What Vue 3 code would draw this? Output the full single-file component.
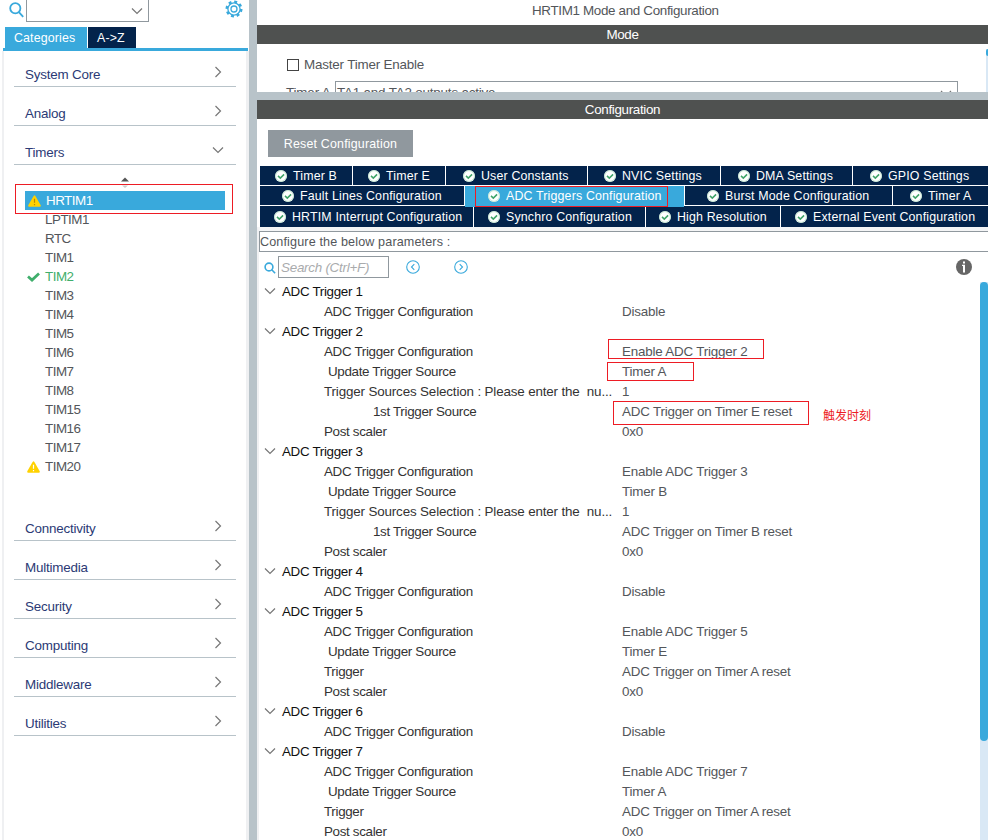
<script setup>
const topCategories = [
  { name: 'System Core', open: false },
  { name: 'Analog', open: false },
  { name: 'Timers', open: true },
]
const bottomCategories = ['Connectivity', 'Multimedia', 'Security', 'Computing', 'Middleware', 'Utilities']
const timers = [
  { name: 'HRTIM1', state: 'warn', selected: true },
  { name: 'LPTIM1' }, { name: 'RTC' }, { name: 'TIM1' },
  { name: 'TIM2', state: 'ok' },
  { name: 'TIM3' }, { name: 'TIM4' }, { name: 'TIM5' }, { name: 'TIM6' },
  { name: 'TIM7' }, { name: 'TIM8' }, { name: 'TIM15' }, { name: 'TIM16' },
  { name: 'TIM17' }, { name: 'TIM20', state: 'warn' },
]

// width: tab width, pad: space before the status icon
const tabRows = [
  [
    { name: 'Timer B', width: 92, pad: 15 },
    { name: 'Timer E', width: 92, pad: 15 },
    { name: 'User Constants', width: 141, pad: 17 },
    { name: 'NVIC Settings', width: 132, pad: 16 },
    { name: 'DMA Settings', width: 131, pad: 17 },
    { name: 'GPIO Settings', width: 135, pad: 17 },
  ],
  [
    { name: 'Fault Lines Configuration', width: 204, pad: 22 },
    { name: 'ADC Triggers Configuration', width: 219, pad: 23, active: true },
    { name: 'Burst Mode Configuration', width: 207, pad: 22 },
    { name: 'Timer A', width: 95, pad: 17 },
  ],
  [
    { name: 'HRTIM Interrupt Configuration', width: 213, pad: 14 },
    { name: 'Synchro Configuration', width: 171, pad: 14 },
    { name: 'High Resolution', width: 134, pad: 13 },
    { name: 'External Event Configuration', width: 207, pad: 14 },
  ],
]

const cfg = (v) => ({ label: 'ADC Trigger Configuration', value: v })
const upd = (v) => ({ label: 'Update Trigger Source', value: v, kind: 'shift' })
const post = { label: 'Post scaler', value: '0x0' }
const sel = { label: 'Trigger Sources Selection : Please enter the \u00a0nu...', value: '1', kind: 'long' }
const first = (v) => ({ label: '1st Trigger Source', value: v, kind: 'deep' })
const groups = [
  { name: 'ADC Trigger 1', rows: [cfg('Disable')] },
  { name: 'ADC Trigger 2', rows: [cfg('Enable ADC Trigger 2'), upd('Timer A'), sel, first('ADC Trigger on Timer E reset'), post] },
  { name: 'ADC Trigger 3', rows: [cfg('Enable ADC Trigger 3'), upd('Timer B'), sel, first('ADC Trigger on Timer B reset'), post] },
  { name: 'ADC Trigger 4', rows: [cfg('Disable')] },
  { name: 'ADC Trigger 5', rows: [cfg('Enable ADC Trigger 5'), upd('Timer E'), { label: 'Trigger', value: 'ADC Trigger on Timer A reset' }, post] },
  { name: 'ADC Trigger 6', rows: [cfg('Disable')] },
  { name: 'ADC Trigger 7', rows: [cfg('Enable ADC Trigger 7'), upd('Timer A'), { label: 'Trigger', value: 'ADC Trigger on Timer A reset' }, post] },
]
</script>

<template>
  <div class="window">
    <aside class="side">
      <div class="side-search">
        <svg class="glass" width="16" height="16" viewBox="0 0 16 16"><circle cx="6.3" cy="6.3" r="5.1" /><path d="M9.9 10.1l4.3 4.7" /></svg>
        <div class="combo">
          <svg width="12" height="8" viewBox="0 0 12 8"><path class="chev" d="M1 1.5l5 5 5-5" /></svg>
        </div>
        <svg class="gear" width="18" height="18" viewBox="0 0 18 18">
          <circle class="teeth" cx="9" cy="9" r="7.3" />
          <circle cx="9" cy="9" r="6.1" />
          <circle cx="9" cy="9" r="3" />
        </svg>
      </div>
      <div class="side-tabs">
        <div class="side-tab on">Categories</div>
        <div class="side-tab az">A-&gt;Z</div>
      </div>
      <div class="side-body">
        <div v-for="c in topCategories" :key="c.name" class="category">
          <span>{{ c.name }}</span>
          <svg v-if="c.open" class="down" width="12" height="12" viewBox="0 0 12 12"><path class="chev" d="M1 3.5l5 5 5-5" /></svg>
          <svg v-else width="12" height="12" viewBox="0 0 12 12"><path class="chev" d="M3.5 1l5 5-5 5" /></svg>
        </div>
        <div class="sorter">
          <svg width="8" height="11" viewBox="0 0 8 11"><path d="M0 4.5L4 .5l4 4z" fill="#555" /><path d="M1 8.5h6L4 11z" fill="#ccc" /></svg>
        </div>
        <ul class="timers">
          <li v-for="t in timers" :key="t.name" :class="[t.state, { selected: t.selected }]">
            <span class="mark">
              <svg v-if="t.state === 'warn'" width="13" height="12" viewBox="0 0 13 12"><path d="M5.6 1.1q.9-1.5 1.8 0l5.2 9q.7 1.6-.9 1.6H1.3q-1.6 0-.9-1.6z" fill="#ffd200" /><path class="bang" d="M6.5 3.8v4M6.5 9v1.3" stroke-width="1.2" /></svg>
              <svg v-if="t.state === 'ok'" width="13" height="10" viewBox="0 0 13 10"><path d="M1 4.5l4 3.6L12 1.5" fill="none" stroke="#3fae6b" stroke-width="2.7" /></svg>
            </span>
            <span>{{ t.name }}</span>
          </li>
        </ul>
        <div v-for="c in bottomCategories" :key="c" class="category">
          <span>{{ c }}</span>
          <svg width="12" height="12" viewBox="0 0 12 12"><path class="chev" d="M3.5 1l5 5-5 5" /></svg>
        </div>
      </div>
      <div class="note-box note-timer"></div>
    </aside>

    <div class="divider"></div>

    <main class="main">
      <div class="title">HRTIM1 Mode and Configuration</div>
      <div class="bar">Mode</div>
      <section class="mode">
        <div class="mode-fields">
          <div class="check-line"><span class="box"></span>Master Timer Enable</div>
          <div class="timer-line">
            <span class="timer-label">Timer A</span>
            <div class="select"><span>TA1 and TA2 outputs active</span>
              <svg width="12" height="8" viewBox="0 0 12 8"><path class="chev" d="M1 1l5 5 5-5" /></svg>
            </div>
          </div>
        </div>
        <div class="mode-scroll"><i></i></div>
      </section>
      <div class="splitter"></div>
      <div class="bar">Configuration</div>
      <div class="actions"><button class="reset">Reset Configuration</button></div>
      <div class="tabs">
        <div v-for="(row, r) in tabRows" :key="r" class="tab-row">
          <div v-for="t in row" :key="t.name" class="tab" :class="{ active: t.active }" :style="{ width: t.width + 'px', paddingLeft: t.pad + 'px' }">
            <svg width="12" height="12" viewBox="0 0 12 12"><circle cx="6" cy="6" r="6" fill="#fff" /><circle cx="6" cy="6" r="5.4" fill="none" stroke="#a9dbbd" stroke-width=".7" /><path d="M3 5.9l2.3 2.2L9.1 4.4" fill="none" stroke="#3fa468" stroke-width="1.5" /></svg>
            <span>{{ t.name }}</span>
          </div>
        </div>
        <div class="note-box note-tab"></div>
      </div>
      <div class="lower">
        <div class="hint">Configure the below parameters :</div>
        <div class="tools">
          <svg class="glass small" width="12" height="12" viewBox="0 0 12 12"><circle cx="5" cy="5" r="3.9" /><path d="M7.8 7.8l3.3 3.5" /></svg>
          <div class="find">Search (Ctrl+F)</div>
          <svg class="nav" width="14" height="14" viewBox="0 0 14 14"><circle cx="7" cy="7" r="6.3" /><path d="M8.3 4.2L5.5 7l2.8 2.8" /></svg>
          <svg class="nav next" width="14" height="14" viewBox="0 0 14 14"><circle cx="7" cy="7" r="6.3" /><path d="M5.7 4.2L8.5 7 5.7 9.8" /></svg>
          <svg class="info" width="16" height="16" viewBox="0 0 16 16"><circle cx="8" cy="8" r="8" fill="#666" /><path d="M7 2.6h2v2H7zM6 5.8h3v7.6H7V7H6z" fill="#fff" /></svg>
        </div>
        <div class="param-area">
          <div class="params">
            <template v-for="g in groups" :key="g.name">
              <div class="group"><svg width="12" height="8" viewBox="0 0 12 8"><path class="chev" d="M1 1.5l5 5 5-5" /></svg><span>{{ g.name }}</span></div>
              <div v-for="p in g.rows" :key="p.label" class="param">
                <span class="label" :class="p.kind">{{ p.label }}</span>
                <span class="value">{{ p.value }}</span>
              </div>
            </template>
          </div>
          <div class="scroll"><i></i></div>
          <div class="note-box note-enable"></div>
          <div class="note-box note-source"></div>
          <div class="note-box note-reset"></div>
          <span class="note-text">触发时刻</span>
        </div>
      </div>
    </main>
  </div>
</template>

<style>
body { overflow: hidden; }
</style>

<style scoped>
* { box-sizing: border-box; }
.window {
  display: flex; width: 988px; height: 840px; overflow: hidden; background: #fff;
  font: 13.4px/20px "Liberation Sans", Arial, sans-serif; letter-spacing: -0.33px; color: #53565a; white-space: pre;
}
svg { flex: none; display: block; }
.chev { fill: none; stroke: #777; stroke-width: 1.2; }

.side { position: relative; width: 249px; flex: none; display: flex; flex-direction: column; }
.side-search { display: flex; height: 27px; align-items: flex-start; padding-left: 9px; }
.glass { fill: none; stroke: #39a9dc; stroke-width: 1.8; margin-top: 2px; }
.combo { width: 123px; height: 22px; margin-left: 1px; border: 1px solid #90989e; border-top: 0; display: flex; justify-content: flex-end; padding: 7px 5px 0 0; }
.gear { margin: 0 0 0 76px; fill: none; stroke: #39a9dc; stroke-width: 1.3; }
.gear .teeth { stroke-width: 2.4; stroke-dasharray: 2.9 2.833; }
.side-tabs { display: flex; gap: 1px; height: 24px; margin: 0 1px 0 3px; padding-left: 2px; border-bottom: 3px solid #39a9dc; }
.side-tab { height: 21px; line-height: 22px; font-size: 12.4px; letter-spacing: .14px; color: #fff; background: #03234b; width: 48px; padding-left: 9px; }
.side-tab.on { width: 82px; background: #39a9dc; }
.side-body { flex: 1; margin-left: 2px; padding: 0 10px; border-left: 2px solid #eff0f2; border-right: 3px solid #eff0f2; }
.category { display: flex; align-items: flex-start; justify-content: space-between; height: 39px; border-bottom: 1px solid #b8c3c9; padding: 16px 12px 0 11px; color: #2b3a75; letter-spacing: -.2px; }
.category:first-child { height: 36px; padding-top: 13px; }
.category span { line-height: 22px; }
.category svg { margin-top: 2px; }
.sorter { height: 26px; display: flex; justify-content: center; padding: 12px 1px 0 0; }
.timers { list-style: none; margin: 0; padding: 0 11px; height: 311px; letter-spacing: -.5px; }
.timers li { display: flex; align-items: center; height: 19px; line-height: 19px; }
.timers .mark { width: 20px; padding-left: 2px; }
.timers .selected { background: #39a9dc; color: #fff; }
.timers .selected .mark { width: 21px; padding-left: 3px; }
.timers .ok { color: #3fae6b; }
.bang { stroke: #fff; }
.selected .bang { stroke: #b98b00; }

.divider { width: 8px; flex: none; background: #b8c3c9; }

.main { flex: 1; display: flex; flex-direction: column; min-width: 0; }
.title { height: 25px; line-height: 21px; padding-left: 275px; }
.bar { height: 19px; flex: none; line-height: 19px; background: #4f5150; color: #fff; text-align: center; }
.mode { display: flex; height: 48px; overflow: hidden; }
.mode-fields { flex: 1; padding: 11px 0 0 29px; }
.check-line { display: flex; align-items: center; letter-spacing: -.18px; }
.box { width: 12px; height: 12px; border: 1px solid #444; margin: 0 5px 0 1px; }
.timer-line { display: flex; padding-top: 6px; }
.timer-label { width: 49px; padding-top: 2px; letter-spacing: -.15px; }
.select { width: 623px; height: 23px; border: 1px solid #90989e; display: flex; justify-content: space-between; padding: 1px 5px 0 1px; letter-spacing: -.18px; }
.select svg { margin-top: 7px; }
.mode-scroll { width: 2px; margin-top: 5px; background: #d9e8f5; }
.mode-scroll i { display: block; height: 7px; border-radius: 4px 0 0 4px; background: #39a9dc; }
.splitter { height: 8px; flex: none; background: #b8c3c9; }
.actions { height: 47px; flex: none; padding: 11px 0 0 11px; }
.reset { display: block; width: 145px; height: 27px; padding: 0; border: 0; background: #90989e; color: #fff; font: 12.4px/28px "Liberation Sans", Arial, sans-serif; letter-spacing: .2px; }

.tabs { position: relative; flex: none; display: flex; flex-direction: column; gap: 1px; height: 61px; margin-left: 3px; background: #fff; }
.tab-row { display: flex; gap: 1px; height: 19px; }
.tab-row:nth-child(3) { height: 21px; }
.tab { display: flex; align-items: center; gap: 6px; background: #03234b; color: #fff; font-size: 12.4px; letter-spacing: .16px; flex: none; }
.tab span { padding-top: 1px; }
.tab.active { height: 21px; padding-bottom: 2px; z-index: 1; background: #39a9dc; }

.lower { flex: 1; display: flex; flex-direction: column; min-height: 0; border-left: 2px solid #eff0f2; border-top: 4px solid #f4f5f6; }
.hint { height: 21px; flex: none; border: 1px solid #90989e; border-right: 0; line-height: 20px; font-size: 12.6px; letter-spacing: .13px; }
.tools { display: flex; height: 29px; flex: none; padding: 4px 16px 0 5px; }
.glass.small { stroke-width: 1.6; margin-top: 6px; }
.find { width: 111px; height: 22px; margin-left: 2px; border: 1px solid #90989e; padding-left: 2px; color: #a9abad; font-style: italic; letter-spacing: -.25px; line-height: 21px; }
.nav { margin: 4px 0 0 17px; fill: none; stroke: #39a9dc; stroke-width: 1.1; }
.next { margin-left: 34px; }
.info { margin: 3px 0 0 auto; }
.param-area { position: relative; flex: 1; display: flex; min-height: 0; overflow: hidden; }
.params { flex: 1; }
.group, .param { display: flex; height: 20px; align-items: center; line-height: 18px; }
.group span, .param span { padding-top: 2px; }
.group { padding-left: 5px; color: #111; }
.group span { margin-left: 6px; }
.label { width: 298px; flex: none; color: #333; }
.param { padding-left: 65px; }
.label.shift { padding-left: 4px; }
.label.deep { padding-left: 49px; }
.label.long { letter-spacing: -.15px; }
.value { letter-spacing: -.2px; }
.scroll { width: 8px; flex: none; margin-top: 1px; background: #d9e8f5; }
.scroll i { display: block; height: 459px; border-radius: 4px; background: #39a9dc; }

.note-box { position: absolute; border: 1px solid #ed1c24; z-index: 2; }
.note-timer { left: 15px; top: 184px; width: 218px; height: 30px; }
.note-tab { left: 215px; top: 20px; width: 193px; height: 21px; }
.note-enable { left: 349px; top: 58px; width: 156px; height: 20px; }
.note-source { left: 348px; top: 81px; width: 87px; height: 19px; }
.note-reset { left: 354px; top: 120px; width: 196px; height: 24px; }
.note-text { position: absolute; left: 564px; top: 124px; font: 12px/20px "Noto Sans CJK SC", sans-serif; letter-spacing: 0; color: #ed1c24; }
</style>
